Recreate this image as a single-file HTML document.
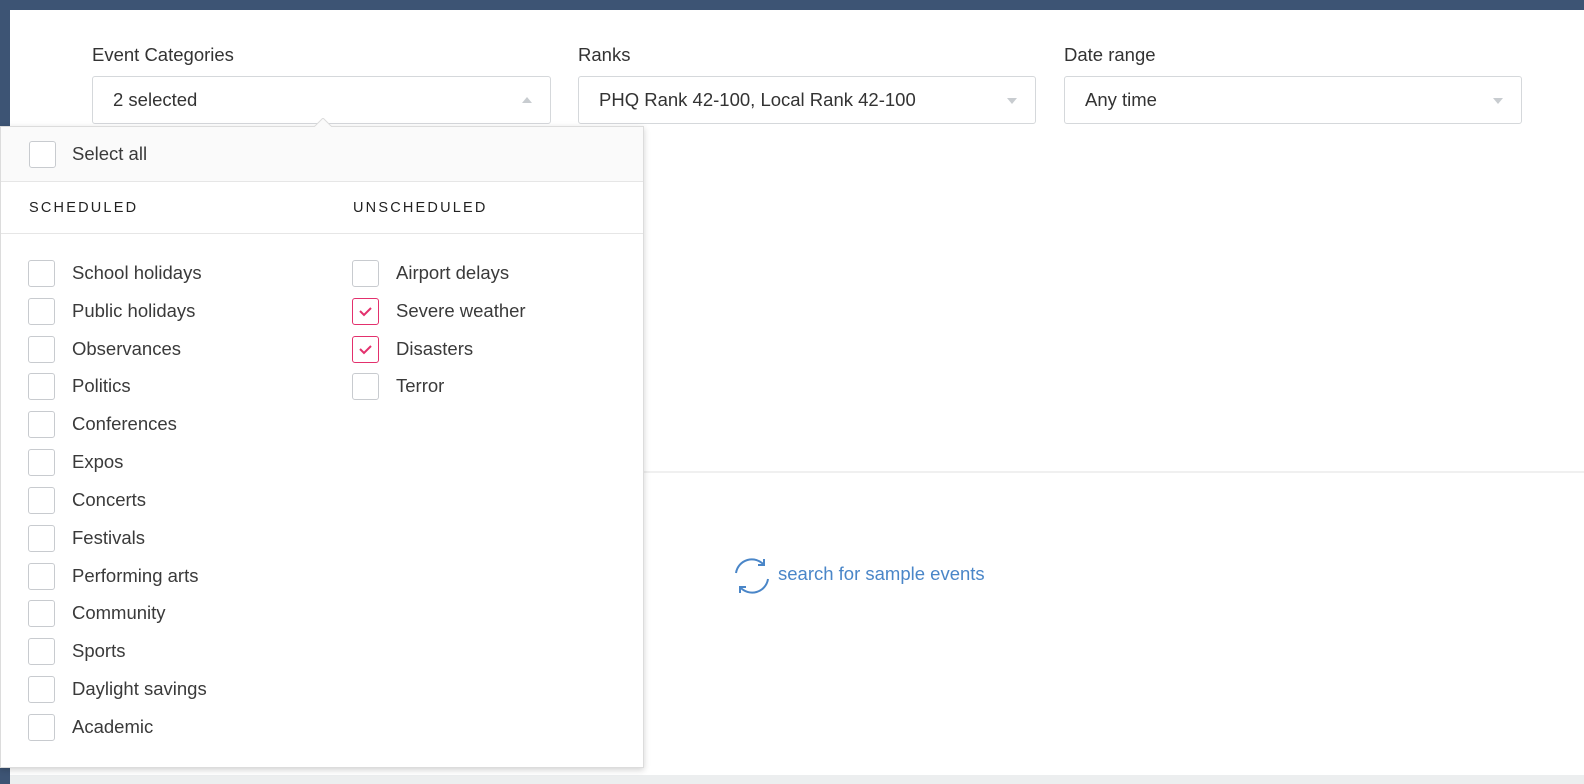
<!DOCTYPE html>
<html><head><style>
*{box-sizing:border-box;margin:0;padding:0}
body{width:1584px;height:784px;background:#3d5474;font-family:"Liberation Sans",sans-serif;position:relative;overflow:hidden;color:#333}
.main{position:absolute;left:10px;top:10px;right:0;height:765px;background:#fff}
.bottom{position:absolute;left:10px;right:0;top:775px;bottom:0;background:#eceeef}
.lbl{position:absolute;top:44px;font-size:18.5px;color:#333;white-space:nowrap}
.inp{position:absolute;top:76px;height:48px;border:1px solid #d5d8db;border-radius:3px;background:#fff;font-size:18.5px;padding:12px 20px;color:#333;white-space:nowrap}
.tri{position:absolute;right:18px;top:21px;width:0;height:0;border-left:5px solid transparent;border-right:5px solid transparent}
.dd{position:absolute;left:0;top:126px;width:644px;height:642px;background:#fff;border:1px solid #dcdcdc;box-shadow:0 2px 6px rgba(0,0,0,.18)}
.sel{height:55px;background:#fafafa;border-bottom:1px solid #e6e6e6;position:relative}
.hdr{height:52px;border-bottom:1px solid #e6e6e6;position:relative}
.h{position:absolute;top:18px;font-size:14.5px;letter-spacing:2.2px;color:#222;white-space:nowrap}
.cb{position:absolute;width:27px;height:27px;border:1px solid #c8cbcf;border-radius:3px;background:#fff}
.cb.on{border-color:#e3306d}
.t{position:absolute;font-size:18.5px;color:#3a3a3a;white-space:nowrap}
.line{position:absolute;left:644px;right:0;top:471px;height:2px;background:#f0f0f0}
</style></head><body>
<div class="main"></div>
<div class="bottom"></div>
<div class="lbl" style="left:92px">Event Categories</div>
<div class="lbl" style="left:578px">Ranks</div>
<div class="lbl" style="left:1064px">Date range</div>
<div class="inp" style="left:92px;width:459px">2 selected<div class="tri" style="border-bottom:6px solid #c8ccd0;top:20px"></div></div>
<div class="inp" style="left:578px;width:458px">PHQ Rank 42-100, Local Rank 42-100<div class="tri" style="border-top:6px solid #c8ccd0"></div></div>
<div class="inp" style="left:1064px;width:458px">Any time<div class="tri" style="border-top:6px solid #c8ccd0"></div></div>
<div class="line"></div>
<svg style="position:absolute;left:732px;top:556px" width="40" height="40" viewBox="0 0 40 40" fill="none" stroke="#4a86c8" stroke-width="2">
<path d="M4 17 A16 16 0 0 1 32 9"/><path d="M26 9 H32 V3"/>
<path d="M36 23 A16 16 0 0 1 8 31"/><path d="M14 31 H8 V37"/>
</svg>
<div style="position:absolute;left:778px;top:563px;font-size:18.5px;color:#4a86c8;white-space:nowrap">search for sample events</div>
<div class="dd">
<svg style="position:absolute;left:312px;top:-9px" width="20" height="10"><path d="M0 10 L10 0 L20 10" fill="#fafafa" stroke="#dcdcdc"/></svg>
<div class="sel"><div class="cb" style="left:28px;top:14px"></div><div class="t" style="left:71px;top:16px">Select all</div></div>
<div class="hdr"><div class="h" style="left:28px">SCHEDULED</div><div class="h" style="left:352px">UNSCHEDULED</div></div>
</div>
<div style="position:absolute;left:0;top:0">
<div class="cb" style="left:28px;top:260px"></div><div class="t" style="left:72px;top:262px">School holidays</div>
<div class="cb" style="left:28px;top:298px"></div><div class="t" style="left:72px;top:300px">Public holidays</div>
<div class="cb" style="left:28px;top:336px"></div><div class="t" style="left:72px;top:338px">Observances</div>
<div class="cb" style="left:28px;top:373px"></div><div class="t" style="left:72px;top:375px">Politics</div>
<div class="cb" style="left:28px;top:411px"></div><div class="t" style="left:72px;top:413px">Conferences</div>
<div class="cb" style="left:28px;top:449px"></div><div class="t" style="left:72px;top:451px">Expos</div>
<div class="cb" style="left:28px;top:487px"></div><div class="t" style="left:72px;top:489px">Concerts</div>
<div class="cb" style="left:28px;top:525px"></div><div class="t" style="left:72px;top:527px">Festivals</div>
<div class="cb" style="left:28px;top:563px"></div><div class="t" style="left:72px;top:565px">Performing arts</div>
<div class="cb" style="left:28px;top:600px"></div><div class="t" style="left:72px;top:602px">Community</div>
<div class="cb" style="left:28px;top:638px"></div><div class="t" style="left:72px;top:640px">Sports</div>
<div class="cb" style="left:28px;top:676px"></div><div class="t" style="left:72px;top:678px">Daylight savings</div>
<div class="cb" style="left:28px;top:714px"></div><div class="t" style="left:72px;top:716px">Academic</div>
<div class="cb" style="left:352px;top:260px"></div><div class="t" style="left:396px;top:262px">Airport delays</div>
<div class="cb on" style="left:352px;top:298px"><svg width="25" height="25"><path d="M7 12 L11 16 L18 9" fill="none" stroke="#e3306d" stroke-width="2"/></svg></div><div class="t" style="left:396px;top:300px">Severe weather</div>
<div class="cb on" style="left:352px;top:336px"><svg width="25" height="25"><path d="M7 12 L11 16 L18 9" fill="none" stroke="#e3306d" stroke-width="2"/></svg></div><div class="t" style="left:396px;top:338px">Disasters</div>
<div class="cb" style="left:352px;top:373px"></div><div class="t" style="left:396px;top:375px">Terror</div>
</div>
</body></html>
